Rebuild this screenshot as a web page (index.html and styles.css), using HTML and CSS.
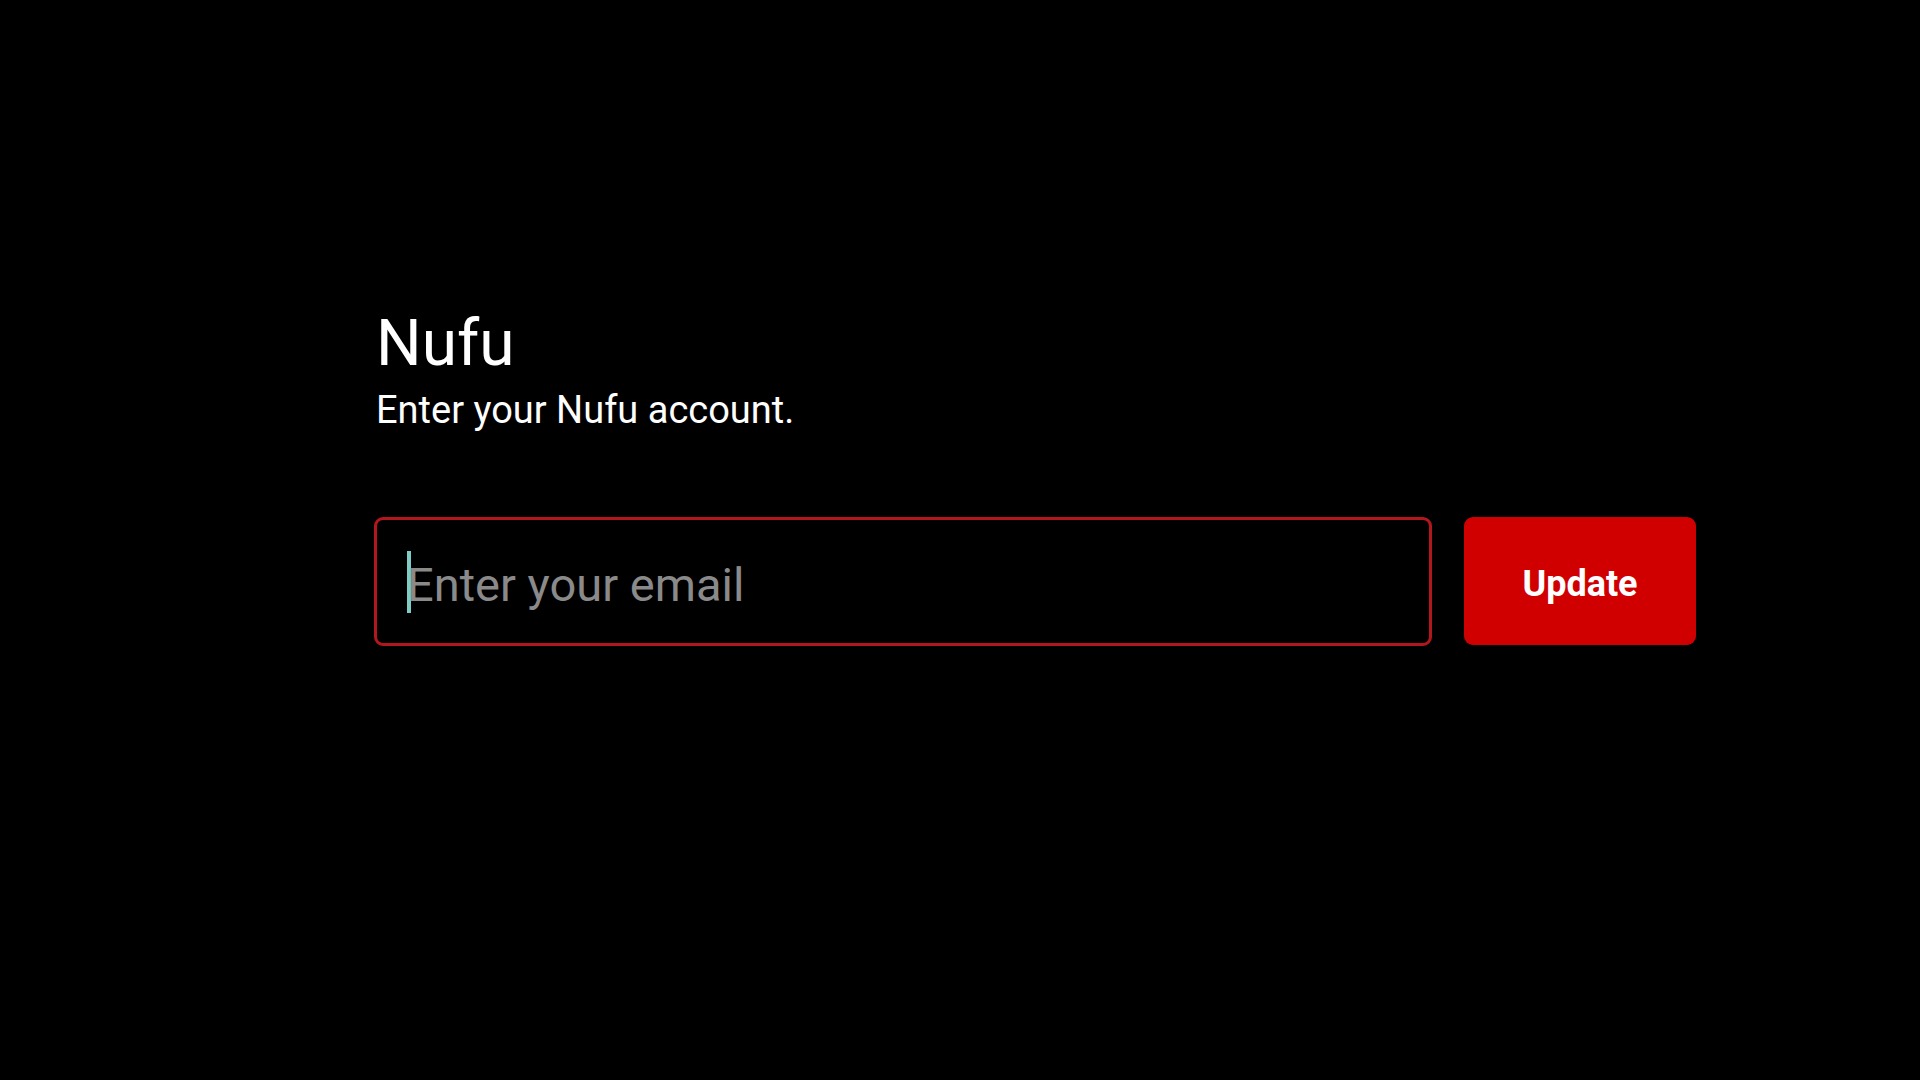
FILE: index.html
```html
<!DOCTYPE html>
<html lang="en">
<head>
<meta charset="utf-8">
<title>Nufu</title>
<link rel="stylesheet" href="styles.css">
</head>
<body>
<main class="page">
  <section class="panel">
    <h1 class="title">Nufu</h1>
    <p class="subtitle">Enter your Nufu account.</p>
    <form class="form-row" onsubmit="return false">
      <div class="field">
        <span class="caret"></span>
        <span class="placeholder">Enter your email</span>
      </div>
      <button class="btn" type="button">Update</button>
    </form>
  </section>
</main>
</body>
</html>
```

FILE: styles.css
```css
html, body {
  margin: 0;
  padding: 0;
  background: #000;
  width: 1920px;
  height: 1080px;
  overflow: hidden;
}

body {
  font-family: Roboto, "Liberation Sans", sans-serif;
  color: #fff;
}

.page {
  padding: 304px 0 0 374px;
}

.panel {
  display: flex;
  flex-direction: column;
  width: 1322px;
}

.title {
  margin: 0;
  font-size: 64px;
  font-weight: 400;
  line-height: 80px;
  padding-left: 2px;
}

.subtitle {
  margin: 4px 0 0;
  font-size: 38px;
  line-height: 44px;
  padding-left: 2px;
}

.form-row {
  display: flex;
  gap: 32px;
  margin-top: 85px;
}

.field {
  flex: 0 0 1058px;
  height: 129px;
  box-sizing: border-box;
  border: 3px solid #b3161c;
  border-radius: 9px;
  display: flex;
  align-items: center;
  padding-left: 30px;
}

.caret {
  width: 4px;
  height: 62px;
  background: #7dcdc6;
  margin-right: -4px;
}

.placeholder {
  font-size: 47px;
  color: #8a8a8a;
  line-height: 62px;
  position: relative;
  top: 3px;
}

.btn {
  flex: 0 0 232px;
  height: 128px;
  border: none;
  border-radius: 9px;
  background: #d10000;
  color: #fff;
  font-family: Roboto, "Liberation Sans", sans-serif;
  font-size: 36px;
  font-weight: 700;
  padding: 6px 0 0;
}
```
